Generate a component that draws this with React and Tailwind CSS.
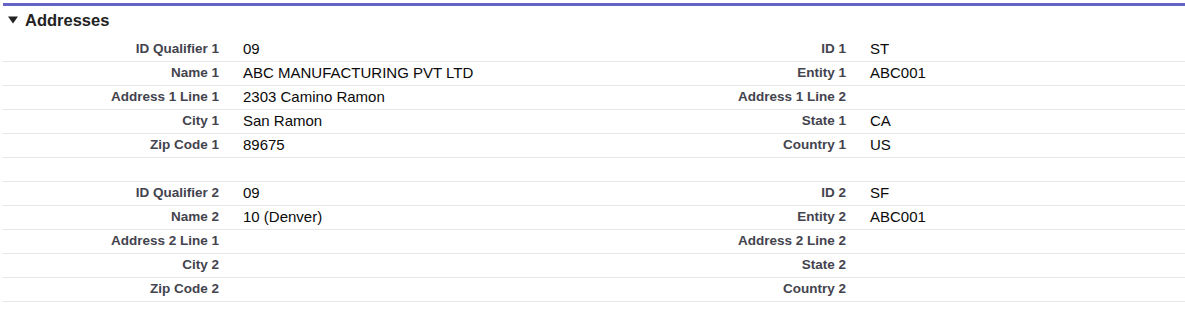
const groups = [
  [
    ['ID Qualifier 1', '09', 'ID 1', 'ST'],
    ['Name 1', 'ABC MANUFACTURING PVT LTD', 'Entity 1', 'ABC001'],
    ['Address 1 Line 1', '2303 Camino Ramon', 'Address 1 Line 2', ''],
    ['City 1', 'San Ramon', 'State 1', 'CA'],
    ['Zip Code 1', '89675', 'Country 1', 'US'],
  ],
  [
    ['ID Qualifier 2', '09', 'ID 2', 'SF'],
    ['Name 2', '10 (Denver)', 'Entity 2', 'ABC001'],
    ['Address 2 Line 1', '', 'Address 2 Line 2', ''],
    ['City 2', '', 'State 2', ''],
    ['Zip Code 2', '', 'Country 2', ''],
  ],
];

const Row = ({ cells }) => (
  <div className="grid grid-cols-[228px_399px_228px_1fr] h-6 items-center border-b border-[#e6e6e6]">
    <div className="text-right pr-3 text-[13.5px] font-bold text-[#43434e]">{cells[0]}</div>
    <div className="pl-3 text-[15px] text-[#0a0a0a]">{cells[1]}</div>
    <div className="text-right pr-3 text-[13.5px] font-bold text-[#43434e]">{cells[2]}</div>
    <div className="pl-3 text-[15px] text-[#0a0a0a]">{cells[3]}</div>
  </div>
);

export default function App() {
  return (
    <div className="w-[1185px] h-[311px] bg-white pl-[3px] pt-[3px] font-[family-name:'Liberation_Sans',Arial,sans-serif]">
      <div className="border-t-[3px] border-[#6464c8]">
        {/* section header */}
        <div className="flex items-center h-8 pb-1 pl-[5px] gap-[7px]">
          <svg width="10" height="8" viewBox="0 0 10 8">
            <path d="M0 0.5 H10 L5 7.5 Z" fill="#222" />
          </svg>
          <span className="text-[16.5px] font-bold text-[#222]">Addresses</span>
        </div>
        {groups.map((rows, gi) => (
          <div key={gi}>
            {rows.map((r, i) => (
              <Row key={i} cells={r} />
            ))}
            {gi === 0 && <div className="h-6 border-b border-[#e6e6e6]" />}
          </div>
        ))}
      </div>
    </div>
  );
}
